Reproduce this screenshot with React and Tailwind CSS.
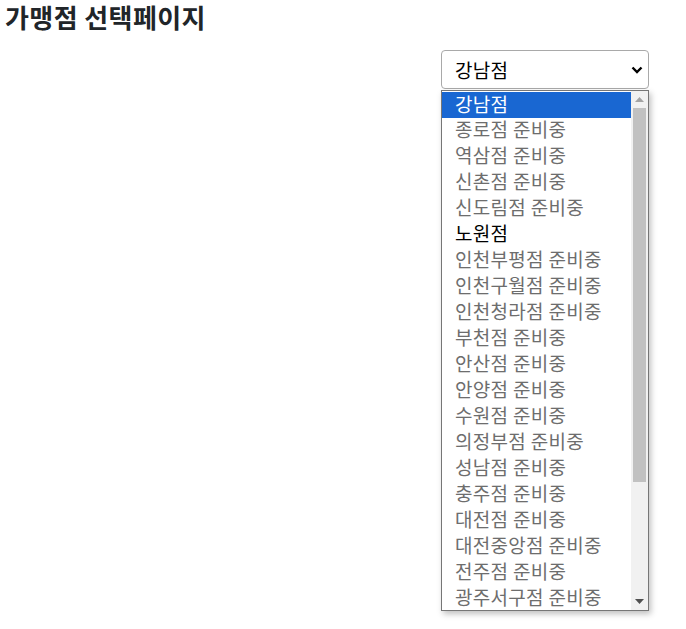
import React from "react";

const items = [
  { t: "강남점", s: "sel" },
  { t: "종로점 준비중", s: "dis" },
  { t: "역삼점 준비중", s: "dis" },
  { t: "신촌점 준비중", s: "dis" },
  { t: "신도림점 준비중", s: "dis" },
  { t: "노원점", s: "ok" },
  { t: "인천부평점 준비중", s: "dis" },
  { t: "인천구월점 준비중", s: "dis" },
  { t: "인천청라점 준비중", s: "dis" },
  { t: "부천점 준비중", s: "dis" },
  { t: "안산점 준비중", s: "dis" },
  { t: "안양점 준비중", s: "dis" },
  { t: "수원점 준비중", s: "dis" },
  { t: "의정부점 준비중", s: "dis" },
  { t: "성남점 준비중", s: "dis" },
  { t: "충주점 준비중", s: "dis" },
  { t: "대전점 준비중", s: "dis" },
  { t: "대전중앙점 준비중", s: "dis" },
  { t: "전주점 준비중", s: "dis" },
  { t: "광주서구점 준비중", s: "dis" },
];

export default function App() {
  const font = { fontFamily: '"Noto Sans CJK KR", "Noto Sans", sans-serif' };
  return (
    <div className="w-[686px] h-[629px] bg-white overflow-hidden" style={font}>
      <h1 className="pl-[5px] pt-0 text-[26px] leading-[34px] tracking-[0.4px] font-bold text-[#212529] whitespace-nowrap">가맹점 선택페이지</h1>
      <div className="flex justify-end pr-[37px] mt-[16px]">
        <div className="relative w-[208px]">
          <div className="h-[39px] border border-[#a9a9a9] rounded-[4px] bg-white flex items-center justify-between pl-[13px] pr-[4px]">
            <span className="text-[19px] tracking-[0.3px] text-black leading-none">강남점</span>
            <svg width="12" height="8" viewBox="0 0 12 8" className="mr-[1px]">
              <path d="M1.5 1.5 L6 6 L10.5 1.5" fill="none" stroke="#000" strokeWidth="2.4" />
            </svg>
          </div>
          <div className="absolute left-0 top-[40px] w-[208px] h-[521px] border border-[#767676] bg-white flex shadow-[2px_3px_6px_rgba(0,0,0,0.25)]">
            <div className="flex-1 flex flex-col">
              {items.map((it, i) => (
                <div
                  key={i}
                  className={
                    "shrink-0 flex items-center pl-[13px] pb-[2px] text-[19px] tracking-[0.3px] whitespace-nowrap " +
                    (it.s === "sel"
                      ? "bg-[#1967d2] text-white h-[26px] mt-[1px] -mb-[1px]"
                      : it.s === "ok"
                      ? "text-black h-[26px]"
                      : "text-[#6d6d6d] h-[26px]")
                  }
                >
                  {it.t}
                </div>
              ))}
            </div>
            <div className="w-[17px] bg-[#f1f1f1] flex flex-col items-center">
              <div className="h-[17px] flex items-center justify-center">
                <svg width="9" height="5" viewBox="0 0 9 5">
                  <path d="M0 5 L4.5 0 L9 5 Z" fill="#a3a3a3" />
                </svg>
              </div>
              <div className="w-[13px] h-[374px] bg-[#c1c1c1]"></div>
              <div className="flex-1"></div>
              <div className="h-[17px] flex items-center justify-center">
                <svg width="9" height="5" viewBox="0 0 9 5">
                  <path d="M0 0 L9 0 L4.5 5 Z" fill="#505050" />
                </svg>
              </div>
            </div>
          </div>
        </div>
      </div>
    </div>
  );
}
